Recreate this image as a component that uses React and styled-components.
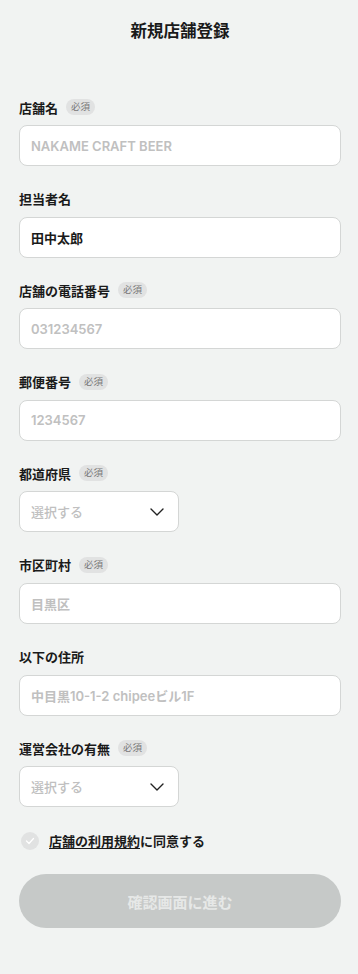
import React from "react";
import styled, { createGlobalStyle } from "styled-components";

const GlobalStyle = createGlobalStyle`
  * { box-sizing: border-box; }
  body {
    margin: 0;
    background: #f1f3f2;
    font-family: Inter, "Noto Sans CJK JP", "Noto Sans", sans-serif;
    color: #1a1a1a;
  }
`;

const fields = [
  { label: "店舗名", required: true, placeholder: "NAKAME CRAFT BEER" },
  { label: "担当者名", value: "田中太郎" },
  { label: "店舗の電話番号", required: true, placeholder: "031234567" },
  { label: "郵便番号", required: true, placeholder: "1234567" },
  { label: "都道府県", required: true, select: true },
  { label: "市区町村", required: true, placeholder: "目黒区" },
  { label: "以下の住所", placeholder: "中目黒10-1-2 chipeeビル1F" },
  { label: "運営会社の有無", required: true, select: true },
];

const Chevron = () => (
  <svg width="14" height="8" viewBox="0 0 14 8" fill="none">
    <path d="M1 1l6 6 6-6" stroke="#222" strokeWidth="1.4" strokeLinecap="round" strokeLinejoin="round" />
  </svg>
);

const App = () => {
  return (
    <Page>
      <GlobalStyle />
      <Title>新規店舗登録</Title>
      <Form>
        {fields.map((f) => (
          <Field key={f.label}>
            <LabelRow>
              <Label>{f.label}</Label>
              {f.required && <Badge>必須</Badge>}
            </LabelRow>
            {f.select ? (
              <SelectBox>
                <span>選択する</span>
                <Chevron />
              </SelectBox>
            ) : (
              <Input $filled={!!f.value}>{f.value || f.placeholder}</Input>
            )}
          </Field>
        ))}
      </Form>
      <Agree>
        <Check>
          <svg width="10" height="8" viewBox="0 0 10 8" fill="none">
            <path d="M1.5 4l2.5 2.5 4.5-5" stroke="#fff" strokeWidth="1.3" strokeLinecap="round" strokeLinejoin="round" />
          </svg>
        </Check>
        <AgreeText>
          <u>店舗の利用規約</u>に同意する
        </AgreeText>
      </Agree>
      <Submit>確認画面に進む</Submit>
    </Page>
  );
};

const Page = styled.div`
  width: 358px;
  min-height: 974px;
  padding: 0 17px 0 19px;
`;

const Title = styled.h1`
  margin: 0;
  padding-top: 20px;
  height: 97px;
  text-align: center;
  font-size: 16.5px;
  font-weight: 700;
  line-height: 22px;
`;

const Form = styled.div`
  display: flex;
  flex-direction: column;
  gap: 22.6px;
`;

const Field = styled.div`
  display: flex;
  flex-direction: column;
  gap: 8px;
`;

const LabelRow = styled.div`
  display: flex;
  align-items: center;
  gap: 8px;
  height: 20px;
`;

const Label = styled.span`
  font-size: 13px;
  font-weight: 700;
`;

const Badge = styled.span`
  background: #e1e2e2;
  color: #777;
  font-size: 9.5px;
  border-radius: 8px;
  padding: 1px 5px;
  line-height: 14px;
`;

const Input = styled.div`
  height: 41px;
  width: 322px;
  background: #fff;
  border: 1px solid #d4d6d5;
  border-radius: 8px;
  padding: 0 11px;
  display: flex;
  align-items: center;
  font-size: 13px;
  font-weight: ${(p) => (p.$filled ? 700 : 600)};
  color: ${(p) => (p.$filled ? "#1a1a1a" : "#c0c0c0")};
`;

const SelectBox = styled(Input)`
  width: 160px;
  justify-content: space-between;
  padding-right: 14px;
  font-weight: 500;
`;

const Agree = styled.div`
  display: flex;
  align-items: center;
  gap: 10px;
  margin-top: 24px;
  padding-left: 2px;
`;

const Check = styled.span`
  width: 18px;
  height: 18px;
  border-radius: 50%;
  background: #e1e2e2;
  display: flex;
  align-items: center;
  justify-content: center;
`;

const AgreeText = styled.span`
  font-size: 13px;
  font-weight: 700;
  color: #1a1a1a;
  u {
    text-decoration-thickness: 1px;
    text-underline-offset: 2px;
  }
`;

const Submit = styled.button`
  display: block;
  margin-top: 24px;
  width: 322px;
  height: 54px;
  border: none;
  border-radius: 27px;
  background: #c6c9c8;
  color: #e6e8e7;
  font-family: inherit;
  font-size: 15px;
  font-weight: 700;
`;

export default App;
